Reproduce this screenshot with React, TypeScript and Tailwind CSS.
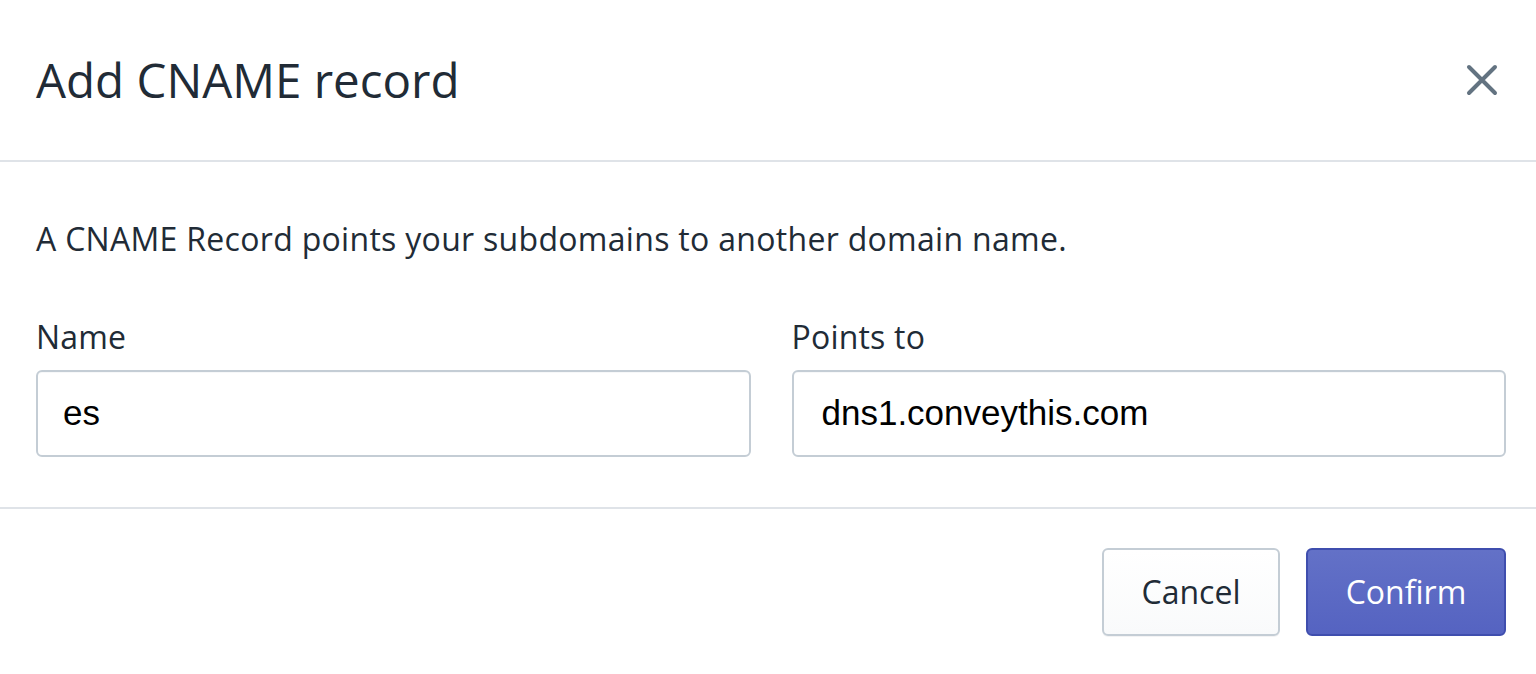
import React from "react";

export default function App() {
  const ui = { fontFamily: '"Open Sans", "Noto Sans", sans-serif' };
  const mono = { fontFamily: '"Liberation Sans", Arial, sans-serif' };
  return (
    <div className="w-full h-[674px] bg-white text-[#212b36] flex flex-col" style={ui}>
      <div className="h-[162px] shrink-0 flex items-center justify-between pl-[36px] pr-[38px] border-b-2 border-[#dfe3e8]">
        <h1 className="text-[47.5px] leading-[56px] font-normal">Add CNAME record</h1>
        <svg width="32" height="32" viewBox="0 0 32 32" className="text-[#637381]">
          <path d="M3 3 L29 29 M29 3 L3 29" stroke="currentColor" strokeWidth="4" strokeLinecap="round" />
        </svg>
      </div>
      <div className="h-[347px] shrink-0 pl-[36px] pr-[30px] pt-[57px] border-b-2 border-[#dfe3e8]">
        <p className="text-[32px] leading-[40px] tracking-[0.3px]">
          A CNAME Record points your subdomains to another domain name.
        </p>
        <div className="grid grid-cols-2 gap-x-[41px] mt-[58px]">
          <div className="flex flex-col">
            <label className="text-[32px] leading-[40px] mb-[13px] tracking-[0.2px]">Name</label>
            <div
              className="h-[87px] border-2 border-[#c4cdd5] rounded-[6px] flex items-center px-[25px] text-[35px] text-black shadow-[inset_0_1px_0_rgba(99,115,129,0.05)]"
              style={mono}
            >
              es
            </div>
          </div>
          <div className="flex flex-col">
            <label className="text-[32px] leading-[40px] mb-[13px] tracking-[0.2px]">Points to</label>
            <div
              className="h-[87px] border-2 border-[#c4cdd5] rounded-[6px] flex items-center px-[28px] text-[35px] text-black shadow-[inset_0_1px_0_rgba(99,115,129,0.05)]"
              style={mono}
            >
              dns1.conveythis.com
            </div>
          </div>
        </div>
      </div>
      <div className="flex justify-end gap-[26px] pr-[30px] pt-[39px]">
        <button className="h-[88px] w-[178px] rounded-[6px] border-2 border-[#c4cdd5] bg-gradient-to-b from-white to-[#f9fafb] text-[32px] text-[#212b36] shadow-[0_1px_0_rgba(22,29,37,0.05)]">
          Cancel
        </button>
        <button className="h-[88px] w-[200px] rounded-[6px] border-2 border-[#3f4eae] bg-gradient-to-b from-[#6371c7] to-[#5563c1] text-[32px] text-white">
          Confirm
        </button>
      </div>
    </div>
  );
}
